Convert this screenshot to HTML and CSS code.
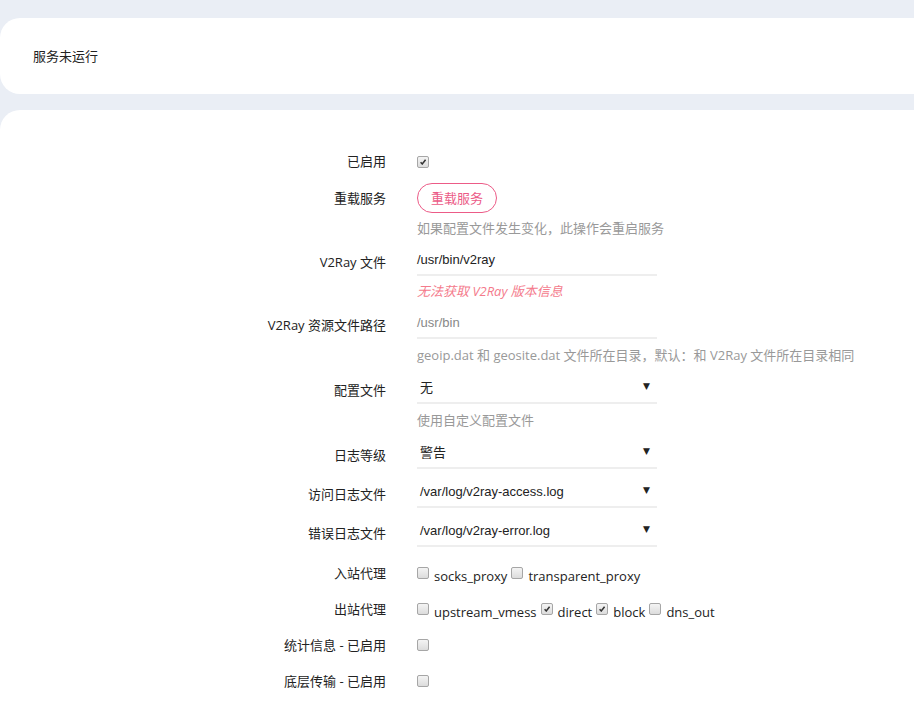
FILE: index.html
```html
<!DOCTYPE html>
<html lang="zh-CN">
<head>
<meta charset="utf-8">
<title>V2Ray</title>
<link rel="stylesheet" href="styles.css">
</head>
<body>
<div class="card status-card">
  <p class="status">服务未运行</p>
</div>
<div class="card form-card">
  <div class="row row-first">
    <div class="label">已启用</div>
    <div class="field"><input type="checkbox" class="cb" checked></div>
  </div>
  <div class="row row-btn">
    <div class="label">重载服务</div>
    <div class="field">
      <button class="btn">重载服务</button>
      <div class="help">如果配置文件发生变化，此操作会重启服务</div>
    </div>
  </div>
  <div class="row row-input">
    <div class="label">V2Ray 文件</div>
    <div class="field">
      <div class="input">/usr/bin/v2ray</div>
      <div class="error">无法获取 V2Ray 版本信息</div>
    </div>
  </div>
  <div class="row row-input">
    <div class="label">V2Ray 资源文件路径</div>
    <div class="field">
      <div class="input placeholder">/usr/bin</div>
      <div class="help">geoip.dat 和 geosite.dat 文件所在目录，默认：和 V2Ray 文件所在目录相同</div>
    </div>
  </div>
  <div class="row row-input">
    <div class="label">配置文件</div>
    <div class="field">
      <div class="input select"><span>无</span><span class="arrow">▼</span></div>
      <div class="help">使用自定义配置文件</div>
    </div>
  </div>
  <div class="row row-input">
    <div class="label">日志等级</div>
    <div class="field">
      <div class="input select"><span>警告</span><span class="arrow">▼</span></div>
    </div>
  </div>
  <div class="row row-input">
    <div class="label">访问日志文件</div>
    <div class="field">
      <div class="input select"><span>/var/log/v2ray-access.log</span><span class="arrow">▼</span></div>
    </div>
  </div>
  <div class="row row-input">
    <div class="label">错误日志文件</div>
    <div class="field">
      <div class="input select"><span>/var/log/v2ray-error.log</span><span class="arrow">▼</span></div>
    </div>
  </div>
  <div class="row row-check">
    <div class="label">入站代理</div>
    <div class="field checks">
      <label class="opt"><input type="checkbox" class="cb"><span>socks_proxy</span></label>
      <label class="opt"><input type="checkbox" class="cb"><span>transparent_proxy</span></label>
    </div>
  </div>
  <div class="row row-check">
    <div class="label">出站代理</div>
    <div class="field checks">
      <label class="opt"><input type="checkbox" class="cb"><span>upstream_vmess</span></label>
      <label class="opt"><input type="checkbox" class="cb" checked><span>direct</span></label>
      <label class="opt"><input type="checkbox" class="cb" checked><span>block</span></label>
      <label class="opt"><input type="checkbox" class="cb"><span>dns_out</span></label>
    </div>
  </div>
  <div class="row row-check">
    <div class="label">统计信息 - 已启用</div>
    <div class="field single"><input type="checkbox" class="cb"></div>
  </div>
  <div class="row row-check">
    <div class="label">底层传输 - 已启用</div>
    <div class="field single"><input type="checkbox" class="cb"></div>
  </div>
</div>
</body>
</html>
```
FILE: styles.css
```css
html, body {
  margin: 0;
  padding: 0;
}
body {
  background: #eaeef5;
  font-family: "Open Sans", "Noto Sans CJK SC", sans-serif;
  font-size: 13px;
  color: #222;
  overflow: hidden;
  height: 716px;
}
.card {
  background: #fff;
  border-radius: 20px 0 0 20px;
}
.status-card {
  margin-top: 18px;
  height: 76px;
  display: flex;
  align-items: center;
  padding-left: 33px;
}
.status {
  margin: 0;
  line-height: 20px;
}
.form-card {
  margin-top: 16px;
  padding-top: 31px;
  height: 600px;
  border-radius: 20px 0 0 0;
}
.row {
  display: grid;
  grid-template-columns: 386px 1fr;
  column-gap: 31px;
  align-items: start;
  margin-bottom: 3px;
}
.label {
  text-align: right;
  line-height: 20px;
  color: #222;
  white-space: nowrap;
}
.field {
  min-width: 0;
}
.row-first {
  height: 40px;
  margin-bottom: 2px;
}
.row-first .label {
  padding-top: 10px;
}
.row-first .cb {
  margin-top: 15px;
}
.row-btn {
  margin-bottom: 2px;
}
.row-btn .label {
  padding-top: 5px;
}
.btn {
  display: block;
  height: 30px;
  padding: 0 13px;
  border: 1px solid #ec5b87;
  border-radius: 15px;
  background: #fff;
  color: #ec5b87;
  font-family: "Open Sans", "Noto Sans CJK SC", sans-serif;
  font-size: 13px;
  line-height: 28px;
}
.help {
  margin-top: 5px;
  line-height: 20px;
  color: #999;
  white-space: nowrap;
}
.input + .help {
  margin-top: 6px;
}
.error {
  margin-top: 6px;
  line-height: 18px;
  color: #f47b8c;
  font-style: italic;
}
.row-input .label {
  padding-top: 12px;
}
.input {
  width: 240px;
  height: 34px;
  box-sizing: content-box;
  padding: 0;
  border-bottom: 2px solid #eeeeee;
  font-family: "Liberation Sans", "Noto Sans CJK SC", sans-serif;
  font-size: 13px;
  line-height: 20px;
  display: flex;
  align-items: flex-end;
}
.input > span:first-child,
.input:not(.select) {
  padding-bottom: 4px;
}
.input:not(.select) {
  box-sizing: border-box;
  height: 36px;
  padding-top: 10px;
  display: block;
}
.placeholder {
  color: #888;
}
.select {
  justify-content: space-between;
  padding-left: 3px;
  width: 237px;
}
.select span:first-child {
  color: #222;
}
.arrow {
  font-size: 9px;
  line-height: 20px;
  padding-bottom: 6px;
  margin-right: 7px;
  color: #222;
  font-family: "DejaVu Sans", sans-serif;
}
.row-check {
  height: 33px;
}
.row-check .label {
  padding-top: 13px;
}
.checks {
  display: flex;
  flex-wrap: wrap;
  padding-top: 17px;
}
.opt {
  display: flex;
  align-items: flex-start;
  margin-right: 4px;
}
.opt span {
  margin-top: -1px;
  margin-left: 5px;
  line-height: 20px;
  font-size: 13px;
  color: #222;
}
.single {
  padding-top: 17px;
}
.cb {
  -webkit-appearance: none;
  appearance: none;
  display: block;
  width: 12px;
  height: 12px;
  margin: 0;
  border: 1px solid #a6a6a6;
  border-radius: 2px;
  background: linear-gradient(#f4f4f4, #dcdcdc);
  position: relative;
  box-sizing: border-box;
}
.cb:checked::after {
  content: "";
  position: absolute;
  left: 2px;
  top: 1px;
  width: 6px;
  height: 7px;
  background: url("data:image/svg+xml,%3Csvg xmlns='http://www.w3.org/2000/svg' viewBox='0 0 8 8'%3E%3Cpath d='M0.8 4.2 L3 6.6 L7.4 1' fill='none' stroke='%23333' stroke-width='2'/%3E%3C/svg%3E") no-repeat center / contain;
}
```
